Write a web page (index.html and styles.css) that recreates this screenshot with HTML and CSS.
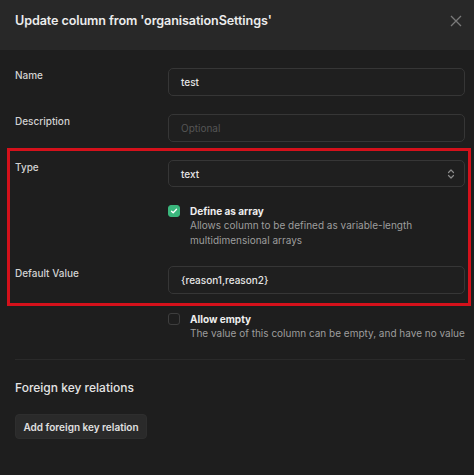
FILE: index.html
```html
<!DOCTYPE html>
<html>
<head>
<meta charset="utf-8">
<link rel="stylesheet" href="styles.css">
</head>
<body>
<div class="dialog">
  <header class="header">
    <h1 class="title">Update column from 'organisationSettings'</h1>
    <svg class="close" width="12" height="12" viewBox="0 0 12 12"><path d="M1 1L11 11M11 1L1 11" stroke="#7a7a7a" stroke-width="1.3" fill="none"/></svg>
  </header>
  <main class="body">
    <div class="row">
      <label class="label">Name</label>
      <div class="input">test</div>
    </div>
    <div class="row">
      <label class="label">Description</label>
      <div class="input placeholder">Optional</div>
    </div>
    <div class="row">
      <label class="label">Type</label>
      <div class="input select">
        <span>text</span>
        <svg width="8" height="12" viewBox="0 0 8 12"><path d="M1.5 4.5L4 2L6.5 4.5M1.5 7.5L4 10L6.5 7.5" stroke="#8a8a8a" stroke-width="1.2" fill="none" stroke-linecap="round" stroke-linejoin="round"/></svg>
      </div>
    </div>
    <div class="row check-row first">
      <span></span>
      <div class="check">
        <span class="box checked"><svg width="8" height="8" viewBox="0 0 8 8"><path d="M1.5 4.2L3.2 5.8L6.5 2.3" stroke="#fff" stroke-width="1.3" fill="none" stroke-linecap="round" stroke-linejoin="round"/></svg></span>
        <div class="check-text">
          <div class="check-title">Define as array</div>
          <div class="check-desc">Allows column to be defined as variable-length<br>multidimensional arrays</div>
        </div>
      </div>
    </div>
    <div class="row default">
      <label class="label">Default Value</label>
      <div class="input">{reason1,reason2}</div>
    </div>
    <div class="row check-row second">
      <span></span>
      <div class="check">
        <span class="box"></span>
        <div class="check-text">
          <div class="check-title">Allow empty</div>
          <div class="check-desc">The value of this column can be empty, and have no value</div>
        </div>
      </div>
    </div>
    <hr class="divider">
    <h2 class="section">Foreign key relations</h2>
    <button class="btn">Add foreign key relation</button>
    <div class="highlight"></div>
  </main>
</div>
</body>
</html>
```
FILE: styles.css
```css
* { box-sizing: border-box; }
html, body { margin: 0; padding: 0; }
body {
  background: #1e1e1e;
  font-family: "Inter", "Liberation Sans", sans-serif;
  width: 474px;
  height: 475px;
  overflow: hidden;
}
.dialog { position: relative; }
.header {
  height: 50px;
  background: #282828;
  display: flex;
  justify-content: space-between;
  align-items: flex-start;
  padding: 13px 12px 0 15px;
}
.title {
  margin: 0;
  font-size: 12.6px;
  line-height: 15px;
  font-weight: 600;
  color: #ececec;
  letter-spacing: -0.1px;
}
.close { margin-top: 2px; }
.body {
  position: relative;
  padding: 18px 9px 0 15px;
}
.row {
  display: grid;
  grid-template-columns: 153px 1fr;
  margin-bottom: 18px;
}
.label {
  font-size: 10px;
  line-height: 14px;
  color: #d2d2d2;
  font-weight: 500;
}
.input {
  height: 28px;
  border: 1px solid #363636;
  border-radius: 5px;
  background: #1f1f1f;
  font-size: 10px;
  color: #e6e6e6;
  padding: 0 12px;
  display: flex;
  align-items: center;
  font-weight: 500;
}
.placeholder { color: #555; font-weight: 400; }
.select {
  height: 27px;
  justify-content: space-between;
  padding-right: 9px;
}
.check-row.first { margin-top: 1px; margin-bottom: 18px; }
.default { margin-bottom: 19px; }
.check-row.second { margin-bottom: 18px; }
.check { display: flex; gap: 10px; }
.box {
  width: 12px;
  height: 12px;
  border-radius: 3px;
  border: 1px solid #3e3e3e;
  flex: none;
  display: flex;
  align-items: center;
  justify-content: center;
}
.box.checked { background: #3ab67c; border-color: #3ab67c; }
.check-title {
  font-size: 10px;
  line-height: 12px;
  font-weight: 700;
  color: #eeeeee;
}
.check-desc {
  font-size: 10px;
  line-height: 15px;
  color: #9d9d9d;
  margin-top: 1px;
}
.divider {
  border: 0;
  border-top: 1px solid #2a2a2a;
  margin: 0 0 20px 0;
}
.section {
  margin: 0;
  font-size: 12px;
  line-height: 16px;
  font-weight: 500;
  color: #e4e4e4;
}
.btn {
  display: block;
  margin-top: 18px;
  height: 25px;
  width: 132px;
  background: #2a2a2a;
  border: 1px solid #2e2e2e;
  border-radius: 4px;
  color: #e0e0e0;
  font-family: inherit;
  font-size: 10px;
  font-weight: 600;
  padding: 0;
}
.highlight {
  position: absolute;
  left: 7px;
  top: 98px;
  width: 464px;
  height: 158px;
  border: 3px solid #d4111b;
  pointer-events: none;
}
```
